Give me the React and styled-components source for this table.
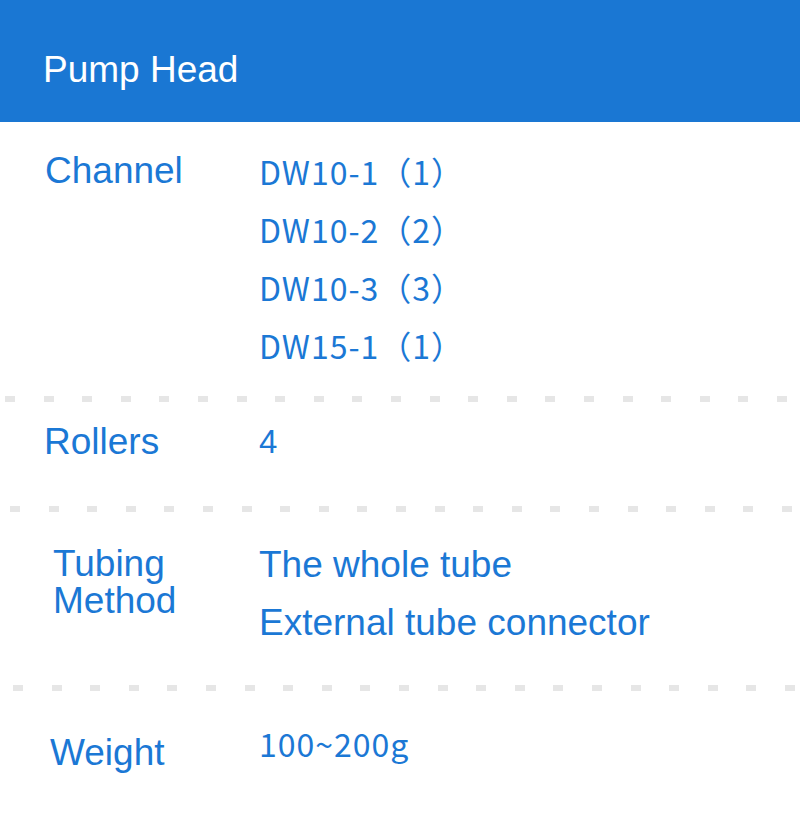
import React from 'react';
import styled, { createGlobalStyle } from 'styled-components';

const GlobalStyle = createGlobalStyle`
  html, body {
    margin: 0;
    padding: 0;
    background: #ffffff;
  }
  body {
    font-family: "Liberation Sans", Arial, sans-serif;
  }
`;

const rows = [
  {
    label: ['Channel'],
    labelX: 45,
    cjk: true,
    values: ['DW10-1（1）', 'DW10-2（2）', 'DW10-3（3）', 'DW15-1（1）'],
    top: 20,
    bottom: 22,
    labelTop: 0,
  },
  { label: ['Rollers'], labelX: 44, values: ['4'], top: 11, bottom: 35, labelTop: 0, small: true },
  {
    label: ['Tubing', 'Method'],
    labelX: 53,
    values: ['The whole tube', 'External tube connector'],
    top: 24,
    bottom: 33,
    labelTop: 9,
  },
  { label: ['Weight'], labelX: 50, cjk: true, values: ['100~200g'], top: 23, bottom: 20, labelTop: 10 },
];

const dashOffsets = [5, 10, 13];

const App = () => {
  return (
    <Page>
      <GlobalStyle />
      <Header>Pump Head</Header>
      {rows.map((row, i) => (
        <React.Fragment key={row.label.join(' ')}>
          <Row top={row.top} bottom={row.bottom}>
            <Label x={row.labelX} top={row.labelTop} lines={row.label.length}>
              {row.label.map((l) => (
                <div key={l}>{l}</div>
              ))}
            </Label>
            <Values>
              {row.values.map((v) => (
                <Value key={v} cjk={row.cjk} small={row.small}>
                  {v}
                </Value>
              ))}
            </Values>
          </Row>
          {i < rows.length - 1 && <Dots offset={dashOffsets[i]} />}
        </React.Fragment>
      ))}
    </Page>
  );
};

export default App;

const Page = styled.div`
  width: 800px;
  min-height: 819px;
  background: #ffffff;
  color: #1b78d5;
`;

const Header = styled.div`
  height: 122px;
  box-sizing: border-box;
  padding: 52px 0 0 43px;
  background: #1a77d3;
  color: #ffffff;
  font-size: 37px;
  line-height: 36px;
`;

const Row = styled.div`
  display: grid;
  grid-template-columns: 259px 1fr;
  padding: ${(p) => p.top}px 0 ${(p) => p.bottom}px;
`;

const Label = styled.div`
  padding-left: ${(p) => p.x}px;
  margin-top: ${(p) => p.top}px;
  font-size: 37px;
  line-height: ${(p) => (p.lines > 1 ? '37px' : '58px')};
`;

const Values = styled.div`
  display: flex;
  flex-direction: column;
`;

const Value = styled.div`
  line-height: 58px;
  white-space: nowrap;
  font-family: ${(p) =>
    p.cjk ? '"Noto Sans CJK SC", "Noto Sans", sans-serif' : '"Liberation Sans", Arial, sans-serif'};
  font-size: ${(p) => (p.cjk ? '32px' : p.small ? '33px' : '37px')};
  letter-spacing: ${(p) => (p.cjk ? '1px' : '0')};
`;

const Dots = styled.div`
  height: 6px;
  background-image: repeating-linear-gradient(
    to right,
    #e6e6e6 0 10px,
    transparent 10px 38.6px
  );
  background-position-x: ${(p) => p.offset}px;
`;
